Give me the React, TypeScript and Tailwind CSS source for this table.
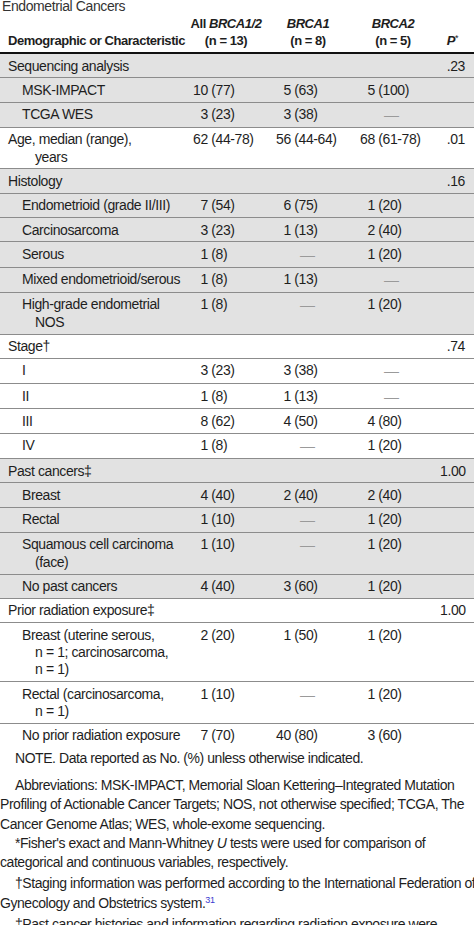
import React from 'react';

type Row = {
  label: string[];
  sub?: boolean;
  vals?: [string, string, string];
  p?: string;
  gray?: boolean;
  last?: boolean;
};

const rows: Row[] = [
  { label: ['Sequencing analysis'], p: '.23', gray: true },
  { label: ['MSK-IMPACT'], sub: true, vals: ['10 (77)', '5 (63)', '5 (100)'], gray: true },
  { label: ['TCGA WES'], sub: true, vals: ['3 (23)', '3 (38)', '—'], gray: true },
  { label: ['Age, median (range),', 'years'], vals: ['62 (44-78)', '56 (44-64)', '68 (61-78)'], p: '.01' },
  { label: ['Histology'], p: '.16', gray: true },
  { label: ['Endometrioid (grade II/III)'], sub: true, vals: ['7 (54)', '6 (75)', '1 (20)'], gray: true },
  { label: ['Carcinosarcoma'], sub: true, vals: ['3 (23)', '1 (13)', '2 (40)'], gray: true },
  { label: ['Serous'], sub: true, vals: ['1 (8)', '—', '1 (20)'], gray: true },
  { label: ['Mixed endometrioid/serous'], sub: true, vals: ['1 (8)', '1 (13)', '—'], gray: true },
  { label: ['High-grade endometrial', 'NOS'], sub: true, vals: ['1 (8)', '—', '1 (20)'], gray: true },
  { label: ['Stage†'], p: '.74' },
  { label: ['I'], sub: true, vals: ['3 (23)', '3 (38)', '—'] },
  { label: ['II'], sub: true, vals: ['1 (8)', '1 (13)', '—'] },
  { label: ['III'], sub: true, vals: ['8 (62)', '4 (50)', '4 (80)'] },
  { label: ['IV'], sub: true, vals: ['1 (8)', '—', '1 (20)'] },
  { label: ['Past cancers‡'], p: '1.00', gray: true },
  { label: ['Breast'], sub: true, vals: ['4 (40)', '2 (40)', '2 (40)'], gray: true },
  { label: ['Rectal'], sub: true, vals: ['1 (10)', '—', '1 (20)'], gray: true },
  { label: ['Squamous cell carcinoma', '(face)'], sub: true, vals: ['1 (10)', '—', '1 (20)'], gray: true },
  { label: ['No past cancers'], sub: true, vals: ['4 (40)', '3 (60)', '1 (20)'], gray: true },
  { label: ['Prior radiation exposure‡'], p: '1.00' },
  { label: ['Breast (uterine serous,', 'n = 1; carcinosarcoma,', 'n = 1)'], sub: true, vals: ['2 (20)', '1 (50)', '1 (20)'] },
  { label: ['Rectal (carcinosarcoma,', 'n = 1)'], sub: true, vals: ['1 (10)', '—', '1 (20)'] },
  { label: ['No prior radiation exposure'], sub: true, vals: ['7 (70)', '40 (80)', '3 (60)'], last: true },
];

// single digit counts get a figure space so the units line up
const Val = ({ v, w }: { v?: string; w: string }) => {
  if (!v) return <div className={w} />;
  if (v === '—')
    return (
      <div className={w}>
        <span className="ml-[24px] text-[15px] leading-[17px] tracking-normal text-[#9a9a9a]">—</span>
      </div>
    );
  const text = /^\d\s/.test(v) ? '\u2007' + v : v;
  return <div className={`${w} whitespace-nowrap`}>{text}</div>;
};

const TableRow = ({ r }: { r: Row }) => (
  <div
    className={`flex pt-[3.5px] pb-[2.5px] leading-[17.3px] ${r.gray ? 'bg-[#e2e2e2]' : 'bg-white'} ${
      r.last ? '' : 'border-b border-[#8c8c8c]'
    }`}
  >
    <div className="w-[193px] shrink-0">
      {r.label.map((t, i) => (
        <div key={i} className={`whitespace-nowrap ${i > 0 ? 'pl-[35px]' : r.sub ? 'pl-[22px]' : 'pl-[8px]'}`}>
          {t}
        </div>
      ))}
    </div>
    <Val v={r.vals?.[0]} w="w-[83px] shrink-0" />
    <Val v={r.vals?.[1]} w="w-[84px] shrink-0" />
    <Val v={r.vals?.[2]} w="w-[80px] shrink-0" />
    <div className="flex-1 pr-[9px] text-right">{r.p}</div>
  </div>
);

export default function App() {
  return (
    <div className="w-[474px] h-[925px] overflow-hidden bg-white text-[14px] tracking-[-0.4px] text-[#1e1e1e] font-['Liberation_Sans',Arial,sans-serif]">
      <div className="h-[15px] pl-[2px] -mt-[2px] leading-[17px] text-[#333] whitespace-nowrap">Endometrial Cancers</div>

      <div className="flex h-[41px] items-end pb-[3px] font-bold text-[13px] tracking-[-0.45px] leading-[17px] border-b-2 border-[#111]">
        <div className="w-[186px] shrink-0 pl-[8px] whitespace-nowrap">Demographic or Characteristic</div>
        <div className="w-[80px] shrink-0 text-center whitespace-nowrap">
          All <i>BRCA1/2</i>
          <br />
          (n = 13)
        </div>
        <div className="w-[84px] shrink-0 text-center whitespace-nowrap">
          <i>BRCA1</i>
          <br />
          (n = 8)
        </div>
        <div className="w-[86px] shrink-0 text-center whitespace-nowrap">
          <i>BRCA2</i>
          <br />
          (n = 5)
        </div>
        <div className="flex-1 pr-[16px] text-right">
          <i>P</i>
          <sup className="text-[9px] font-normal">*</sup>
        </div>
      </div>

      {rows.map((r, i) => (
        <TableRow key={i} r={r} />
      ))}

      <div className="pt-[2px] leading-[19.4px] tracking-[-0.45px]">
        <p className="indent-[15px] mb-[7.5px] whitespace-nowrap">NOTE. Data reported as No. (%) unless otherwise indicated.</p>
        <p className="indent-[15px] whitespace-nowrap">
          Abbreviations: MSK-IMPACT, Memorial Sloan Kettering–Integrated Mutation
          <br />
          Profiling of Actionable Cancer Targets; NOS, not otherwise specified; TCGA, The
          <br />
          Cancer Genome Atlas; WES, whole-exome sequencing.
        </p>
        <p className="indent-[15px] whitespace-nowrap">
          *Fisher's exact and Mann-Whitney <i>U</i> tests were used for comparison of
          <br />
          categorical and continuous variables, respectively.
        </p>
        <p className="indent-[15px] mt-[1.5px] whitespace-nowrap">
          †Staging information was performed according to the International Federation of
          <br />
          Gynecology and Obstetrics system.
          <sup className="text-[9px] text-[#3b3bd0]">31</sup>
        </p>
        <p className="indent-[15px] mt-[1.5px] whitespace-nowrap">
          ‡Past cancer histories and information regarding radiation exposure were
        </p>
      </div>
    </div>
  );
}
